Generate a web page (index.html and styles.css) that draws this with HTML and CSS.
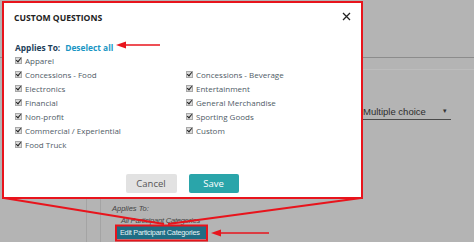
FILE: index.html
```html
<!DOCTYPE html>
<html>
<head>
<meta charset="utf-8">
<link rel="stylesheet" href="styles.css">
</head>
<body>
<div class="page">
  <div class="page-top"></div>
  <div class="page-body">
    <div class="col col-a"></div>
    <div class="col col-b"></div>
    <div class="col col-c">
      <div class="faint-line"></div>
      <div class="select-row">
        <div class="select"><span>Multiple choice</span><span class="caret">▾</span></div>
      </div>
      <div class="applies">
        <div class="applies-label">Applies To:</div>
        <div class="applies-value">All Participant Categories</div>
        <div class="edit-wrap"><span class="edit-btn">Edit Participant Categories</span></div>
      </div>
    </div>
  </div>
</div>

<div class="modal">
  <div class="modal-head">
    <h1 class="modal-title">CUSTOM QUESTIONS</h1>
    <span class="close">
      <svg width="9" height="9" viewBox="0 0 9 9"><path d="M1 1L8 8M8 1L1 8" stroke="#222" stroke-width="1.3" fill="none"/></svg>
    </span>
  </div>
  <div class="applies-row">
    <span class="applies-title">Applies To:</span>
    <span class="deselect">Deselect all</span>
  </div>
  <div class="options">
    <div class="opt-col">
      <label class="opt"><span class="cb"></span>Apparel</label>
      <label class="opt"><span class="cb"></span>Concessions - Food</label>
      <label class="opt"><span class="cb"></span>Electronics</label>
      <label class="opt"><span class="cb"></span>Financial</label>
      <label class="opt"><span class="cb"></span>Non-profit</label>
      <label class="opt"><span class="cb"></span>Commercial / Experiential</label>
      <label class="opt"><span class="cb"></span>Food Truck</label>
    </div>
    <div class="opt-col">
      <label class="opt opt-empty"></label>
      <label class="opt"><span class="cb"></span>Concessions - Beverage</label>
      <label class="opt"><span class="cb"></span>Entertainment</label>
      <label class="opt"><span class="cb"></span>General Merchandise</label>
      <label class="opt"><span class="cb"></span>Sporting Goods</label>
      <label class="opt"><span class="cb"></span>Custom</label>
    </div>
  </div>
  <div class="actions">
    <button class="btn btn-cancel">Cancel</button>
    <button class="btn btn-save">Save</button>
  </div>
</div>

<svg class="annot" width="474" height="242" viewBox="0 0 474 242">
  <g stroke="#e8141c" fill="none" stroke-width="2">
    <path d="M4 198 L164 224"/>
    <path d="M361 198 L168 224"/>
    <rect x="116" y="225.5" width="91" height="15" stroke-width="2"/>
    <path d="M124 45 L160 45" stroke-width="1.6"/>
    <path d="M219 233 L269 233" stroke-width="1.6"/>
  </g>
  <g fill="#e8141c">
    <path d="M116 45 L126 41.5 L126 48.5 Z"/>
    <path d="M211 233 L221 229.5 L221 236.5 Z"/>
  </g>
</svg>
</body>
</html>
```
FILE: styles.css
```css
* { box-sizing: border-box; }
html, body { margin: 0; padding: 0; }
body {
  width: 474px;
  height: 242px;
  overflow: hidden;
  position: relative;
  background: #b4b4b4;
  font-family: "Open Sans", "Liberation Sans", sans-serif;
}
.page { width: 474px; height: 242px; display: flex; flex-direction: column; }
.page-top { height: 58px; border-bottom: 1px solid #8c8c8c; }
.page-body {
  flex: 1;
  display: grid;
  grid-template-columns: 86px 14px 1fr;
}
.col-b { border-left: 1px solid #a4a4a4; }
.col-c { border-left: 1px solid #a4a4a4; display: flex; flex-direction: column; }
.faint-line { height: 12px; border-bottom: 1px solid #bdbdbd; }
.select-row { padding-left: 262px; padding-top: 33px; }
.select {
  width: 88px;
  height: 17px;
  display: flex;
  align-items: center;
  justify-content: space-between;
  border-bottom: 1.5px solid #4a4a4a;
  font-family: "Liberation Sans", Arial, sans-serif;
  font-size: 9.5px;
  color: #2d2d2d;
  padding-right: 4px;
}
.caret { font-size: 7px; color: #333; }
.applies {
  margin-top: 84px;
  padding-left: 11px;
  font-family: "Liberation Sans", Arial, sans-serif;
  font-size: 7.5px;
  color: #444;
}
.applies-label { font-style: italic; height: 12px; }
.applies-value { font-style: italic; padding-left: 9px; height: 9px; line-height: 9px; letter-spacing: -0.2px; }
.edit-wrap { padding-left: 5px; padding-top: 1px; }
.edit-btn {
  display: inline-block;
  background: #1f6d84;
  color: #e8f3f6;
  height: 13px;
  line-height: 13px;
  width: 89px;
  padding: 0 0 0 3px;
  font-size: 7.3px;
  letter-spacing: -0.25px;
  white-space: nowrap;
  overflow: hidden;
}

.modal {
  position: absolute;
  left: 2px;
  top: 1px;
  width: 361px;
  height: 198px;
  background: #fff;
  border: 2px solid #e8141c;
  padding: 0 8px 0 8px;
}
.modal-head { display: flex; justify-content: space-between; align-items: center; height: 30px; padding-left: 2px; }
.modal-title {
  margin: 0;
  font-size: 8.6px;
  font-weight: 700;
  color: #222;
  padding-top: 0;
}
.close { display: flex; margin-right: 2px; margin-top: -4px; }
.applies-row { margin-top: 8px; padding-left: 3px; height: 13px; display: flex; align-items: center; gap: 5px; font-size: 8.4px; font-weight: 700; }
.applies-title { color: #1d3f5a; }
.deselect { color: #1a96c4; }
.options { display: flex; padding-left: 3px; margin-top: -1px; }
.opt-col { display: flex; flex-direction: column; }
.opt-col:first-child { width: 171px; }
.opt {
  height: 14px;
  display: flex;
  align-items: center;
  font-size: 8px;
  color: #4f5b66;
}
.cb {
  width: 7px;
  height: 7px;
  background: #d9d9d9;
  border: 1px solid #a8a8a8;
  margin-right: 3px;
  position: relative;
}
.cb::after {
  content: "";
  position: absolute;
  left: 1px;
  top: -1px;
  width: 2px;
  height: 4px;
  border-right: 1.5px solid #222;
  border-bottom: 1.5px solid #222;
  transform: rotate(40deg);
}
.actions { display: flex; justify-content: center; gap: 12px; margin-top: 23px; padding-right: 1px; }
.btn {
  font-family: "Open Sans", sans-serif;
  font-size: 9.5px;
  width: 51px;
  height: 19px;
  border: none;
  border-radius: 2px;
  padding: 0;
}
.btn-cancel { background: #e2e2e2; color: #555; }
.btn-save { background: #2aa5aa; color: #fff; width: 50px; }

.annot { position: absolute; left: 0; top: 0; pointer-events: none; }
```
